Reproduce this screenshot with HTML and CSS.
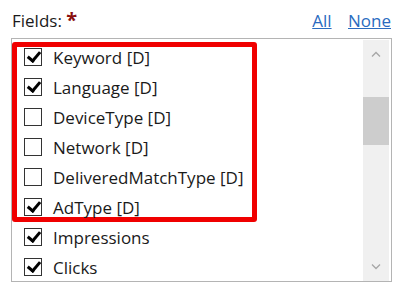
FILE: index.html
```html
<!DOCTYPE html>
<html lang="en">
<head>
    <meta charset="UTF-8">
    <meta name="viewport" content="width=device-width, initial-scale=1.0">
    <title>Fields</title>
    <link rel="stylesheet" href="styles.css">
</head>
<body>
<div class="picker">
  <div class="picker-head">
    <span class="label">Fields: <span class="req">*</span></span>
    <span class="links">
      <a href="#" class="link">All</a>
      <a href="#" class="link">None</a>
    </span>
  </div>

  <div class="listbox">
    <div class="list">
      <!-- highlighted group of dimension fields -->
      <div class="group">
        <label class="row"><span class="box on"></span>Keyword [D]</label>
        <label class="row"><span class="box on"></span>Language [D]</label>
        <label class="row"><span class="box"></span>DeviceType [D]</label>
        <label class="row"><span class="box"></span>Network [D]</label>
        <label class="row"><span class="box"></span>DeliveredMatchType [D]</label>
        <label class="row"><span class="box on"></span>AdType [D]</label>
      </div>
      <label class="row"><span class="box on"></span>Impressions</label>
      <label class="row"><span class="box on"></span>Clicks</label>
    </div>

    <div class="scrollbar">
      <div class="arrow">
        <svg width="10" height="6" viewBox="0 0 10 6"><path d="M1 5.5 L5 1.5 L9 5.5" fill="none" stroke="#a6a6a6" stroke-width="1.3"/></svg>
      </div>
      <div class="track">
        <div class="thumb"></div>
      </div>
      <div class="arrow">
        <svg width="10" height="6" viewBox="0 0 10 6"><path d="M1 0.5 L5 4.5 L9 0.5" fill="none" stroke="#a6a6a6" stroke-width="1.3"/></svg>
      </div>
    </div>
  </div>
</div>
</body>
</html>
```

FILE: styles.css
```css
body {
    margin: 0;
    background: white;
    font-family: "Open Sans", "Noto Sans", sans-serif;
    color: #1a1a1a;
}

.picker {
    width: 381px;
    margin-left: 11px;
}

.picker-head {
    display: flex;
    justify-content: space-between;
    align-items: flex-end;
    height: 38px;
    font-size: 17px;
}
.label {
    padding-left: 1px;
    padding-bottom: 6px;
}
.req {
    color: #8a1010;
    font-weight: bold;
    font-size: 20px;
    line-height: 10px;
}
.links {
    padding-bottom: 6px;
    padding-right: 1px;
}
.link {
    color: #2a6bbf;
    text-decoration: underline;
    margin-left: 12px;
}

.listbox {
    display: flex;
    height: 242px;
    border: 1px solid #b4b4b4;
    overflow: hidden;
}
.list {
    flex: 1;
    padding-top: 3px;
}
.group {
    width: 245px;
    box-shadow: inset 0 0 0 5px #f00000;
    border-radius: 3px;
}
.row {
    display: flex;
    align-items: center;
    height: 30px;
    padding-left: 12px;
    font-size: 17px;
}
.box {
    width: 18px;
    height: 18px;
    border: 1px solid #333;
    margin-right: 11px;
    box-sizing: border-box;
    background: white;
    position: relative;
}
.box.on::after {
    content: "";
    position: absolute;
    left: 5px;
    top: 0px;
    width: 5px;
    height: 10px;
    border: solid #000;
    border-width: 0 3px 3px 0;
    transform: rotate(40deg);
}

.scrollbar {
    width: 26px;
    margin: 1px 2px 0 0;
    background: #f0f0f0;
    display: flex;
    flex-direction: column;
}
.arrow {
    height: 28px;
    display: flex;
    align-items: center;
    justify-content: center;
}
.track {
    flex: 1;
    padding-top: 29px;
}
.thumb {
    height: 48px;
    background: #cdcdcd;
}
```
